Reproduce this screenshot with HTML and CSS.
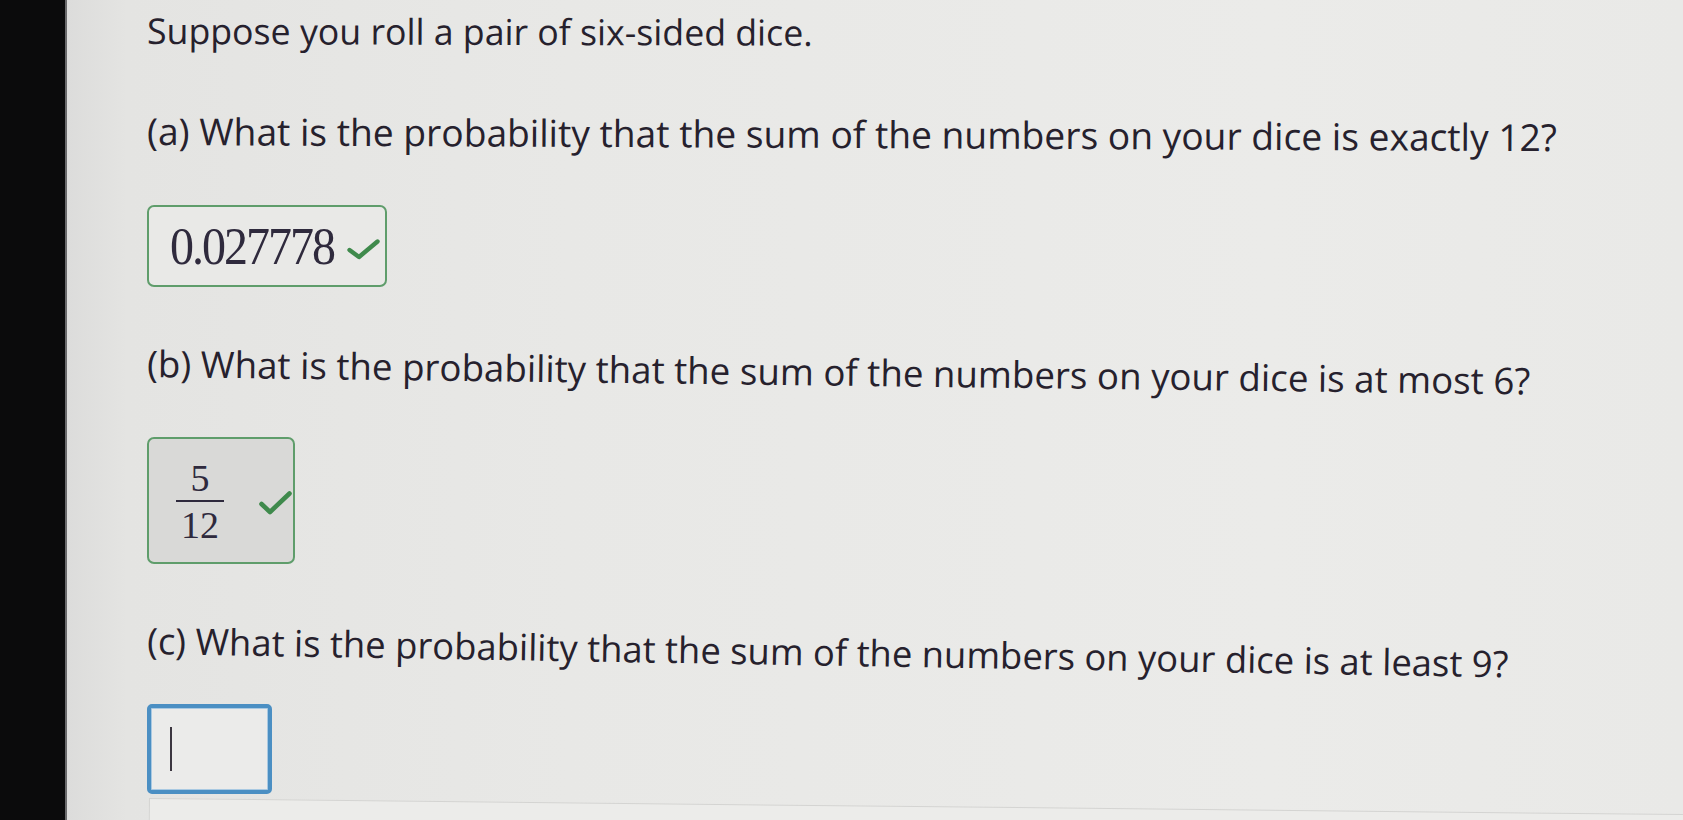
FILE: index.html
```html
<!DOCTYPE html>
<html lang="en">
<head>
<meta charset="utf-8">
<title>Dice probability</title>
<link rel="stylesheet" href="styles.css">
</head>
<body>
<div class="screen">
  <div class="bezel"></div>
  <main class="page">
    <p class="intro">Suppose you roll a pair of six-sided dice.</p>

    <p class="q qa">(a) What is the probability that the sum of the numbers on your dice is exactly 12?</p>
    <div class="answer answer-a">
      <span class="num">0.027778</span>
      <svg class="check check-a" viewBox="0 0 33 21" width="33" height="21"><path d="M2.5 11 L12 18 L30.5 2.5" fill="none" stroke="#3f8a4c" stroke-width="4.4" stroke-linecap="round" stroke-linejoin="round"/></svg>
    </div>

    <p class="q qb">(b) What is the probability that the sum of the numbers on your dice is at most 6?</p>
    <div class="answer answer-b">
      <span class="frac">
        <span class="frac-n">5</span>
        <span class="frac-d">12</span>
      </span>
      <svg class="check check-b" viewBox="0 0 33 24" width="33" height="24"><path d="M2.5 13 L11 21 L30.5 2.5" fill="none" stroke="#3f8a4c" stroke-width="4.6" stroke-linecap="round" stroke-linejoin="round"/></svg>
    </div>

    <p class="q qc">(c) What is the probability that the sum of the numbers on your dice is at least 9?</p>
    <div class="answer answer-c">
      <span class="cursor"></span>
    </div>

    <div class="panel"></div>
  </main>
</div>
</body>
</html>
```

FILE: styles.css
```css
html, body {
  margin: 0;
  padding: 0;
  height: 100%;
  overflow: hidden;
}

body {
  background: #0b0b0c;
  font-family: "Open Sans", Lato, sans-serif;
  color: #26212d;
}

.screen {
  display: flex;
  height: 820px;
}

.bezel {
  width: 65px;
  flex: none;
  background: #0b0b0c;
  border-right: 2px solid #6a6a6c;
}

.page {
  flex: 1;
  padding-left: 80px;
  background: linear-gradient(90deg, #dcdcdb 0px, #e4e4e2 60px, #e8e8e6 500px, #ebebe9 1200px, #e9e9e7 100%);
  overflow: hidden;
}

p {
  margin: 0;
  line-height: 1.2;
  white-space: nowrap;
  font-weight: 500;
  transform-origin: 0 70%;
}

.intro {
  font-size: 35.7px;
  padding-top: 9px;
  transform: rotate(0.15deg);
}

.qa {
  font-size: 37.2px;
  margin-top: 57px;
  transform: rotate(0.25deg);
}

.qb {
  font-size: 36.7px;
  margin-top: 54px;
  transform: rotate(0.72deg);
}

.qc {
  font-size: 36.4px;
  margin-top: 55px;
  transform: rotate(0.98deg);
}

.answer {
  box-sizing: border-box;
  display: flex;
  align-items: center;
  border: 2px solid #5f9d6b;
  border-radius: 7px;
}

.answer-a {
  width: 240px;
  height: 82px;
  margin-top: 52px;
  padding-left: 21px;
  background: #e9e9e7;
}

.num {
  font-family: "Liberation Serif", "DejaVu Serif", serif;
  font-size: 48px;
  letter-spacing: -2px;
  color: #2f2a3d;
  display: inline-block;
  transform: scaleY(1.08);
}

.check-a {
  margin-left: 13px;
  margin-top: 6px;
}

.answer-b {
  width: 148px;
  height: 127px;
  margin-top: 51px;
  padding-left: 27px;
  background: #d9d9d7;
}

.frac {
  display: inline-flex;
  flex-direction: column;
  align-items: center;
  font-family: "Liberation Serif", "DejaVu Serif", serif;
  font-size: 38px;
  line-height: 1;
  color: #2f2a3d;
  margin-top: 2px;
}

.frac-n {
  padding-bottom: 3px;
}

.frac-d {
  border-top: 2px solid #2f2a3d;
  padding: 4px 5px 0;
}

.check-b {
  margin-left: 35px;
  margin-top: 6px;
}

.answer-c {
  width: 125px;
  height: 90px;
  margin-top: 42px;
  border: 4px solid #4b8fc3;
  border-radius: 5px;
  box-shadow: inset 0 0 0 1px #a9c9e2;
  background: #ebebea;
  padding-left: 19px;
}

.cursor {
  width: 2px;
  height: 44px;
  background: #3b3640;
}

.panel {
  margin-top: 4px;
  margin-left: 2px;
  height: 60px;
  background: #ececea;
  border-top: 1px solid #d4d4d2;
  border-left: 1px solid #d4d4d2;
  transform: rotate(0.6deg);
  transform-origin: 0 0;
}
```
